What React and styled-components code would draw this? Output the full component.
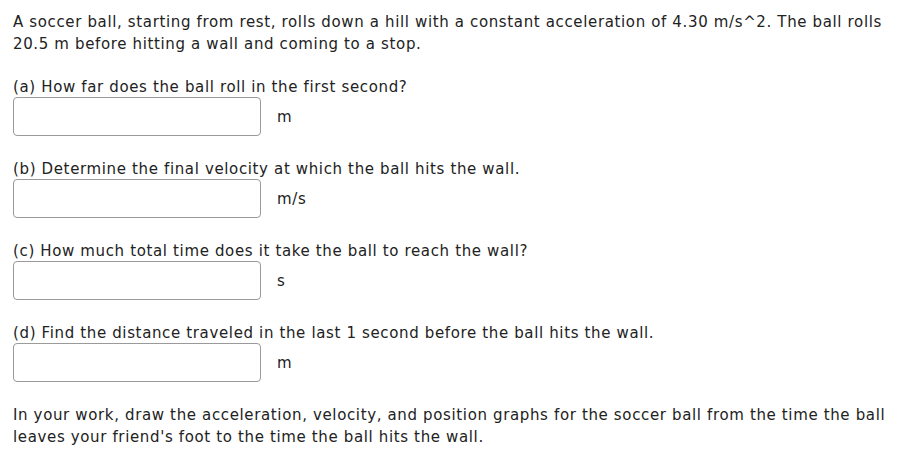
import React from "react";
import styled, { createGlobalStyle } from "styled-components";

const GlobalStyle = createGlobalStyle`
  body {
    margin: 0;
    background: #fff;
    font-family: "DejaVu Sans", sans-serif;
    color: #222;
  }
`;

const Page = styled.div`
  padding: 11px 13px 0 13px;
  font-size: 15px;
  line-height: 22px;
  letter-spacing: 0.64px;
`;

const Text = styled.p`
  margin: 0;
  white-space: nowrap;
`;

const Part = styled.div`
  margin-top: ${(p) => p.$gap}px;
`;

const AnswerRow = styled.div`
  display: flex;
  align-items: center;
  gap: 16px;
  margin-top: -1px;
`;

const AnswerBox = styled.input`
  box-sizing: border-box;
  width: 248px;
  height: 39px;
  border: 1px solid #9a9a9a;
  border-radius: 4px;
  background: #fff;
  outline: none;
`;

const Unit = styled.span`
  font-size: 15px;
`;

const parts = [
  { q: "(a) How far does the ball roll in the first second?", unit: "m" },
  { q: "(b) Determine the final velocity at which the ball hits the wall.", unit: "m/s" },
  { q: "(c) How much total time does it take the ball to reach the wall?", unit: "s" },
  { q: "(d) Find the distance traveled in the last 1 second before the ball hits the wall.", unit: "m" },
];

export default function App() {
  return (
    <>
      <GlobalStyle />
      <Page>
        <Text>
          A soccer ball, starting from rest, rolls down a hill with a constant acceleration of 4.30 m/s^2. The ball rolls
          <br />
          20.5 m before hitting a wall and coming to a stop.
        </Text>
        {parts.map((p, i) => (
          <Part key={i} $gap={i === 0 ? 21 : 22}>
            <Text>{p.q}</Text>
            <AnswerRow>
              <AnswerBox type="text" />
              <Unit>{p.unit}</Unit>
            </AnswerRow>
          </Part>
        ))}
        <Part $gap={22}>
          <Text>
            In your work, draw the acceleration, velocity, and position graphs for the soccer ball from the time the ball
            <br />
            leaves your friend's foot to the time the ball hits the wall.
          </Text>
        </Part>
      </Page>
    </>
  );
}
